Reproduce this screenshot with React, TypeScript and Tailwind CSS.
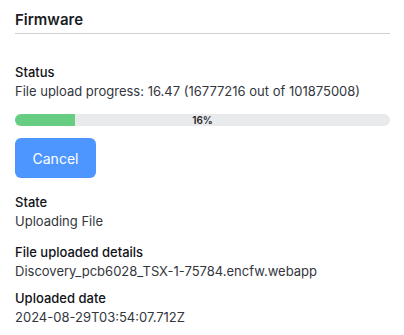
import React from "react";

function Field({ label, value, className = "" }: { label: string; value: string; className?: string }) {
  return (
    <div className={className}>
      <div className="text-[13px] leading-[19px] font-medium text-[#111318]">{label}</div>
      <div className="text-[13px] leading-[19px] text-[#33363d]">{value}</div>
    </div>
  );
}

export default function App() {
  const pct = 16;
  return (
    <div className="w-[404px] h-[335px] bg-white px-[15px] pt-[10px] overflow-hidden" style={{ fontFamily: "Inter, 'Noto Sans', sans-serif" }}>
      <div className="text-[15px] leading-[20px] font-semibold text-[#1a1d24] pb-[3px] border-b border-[#cfd1d4] mr-[-1px]">Firmware</div>
      <Field className="mt-[29px]" label="Status" value="File upload progress: 16.47 (16777216 out of 101875008)" />
      <div className="relative mt-[13px] h-[12px] w-[375px] rounded-full bg-[#e9eaec] overflow-hidden">
        <div className="h-full bg-[#66cd82]" style={{ width: `${pct}%` }} />
        <div className="absolute inset-0 flex items-center justify-center text-[10px] font-semibold text-[#1f2328] leading-none">{pct}%</div>
      </div>
      <button className="mt-[12px] w-[81px] h-[40px] rounded-[6px] bg-[#4d96ff] text-white text-[14px] flex items-center justify-center">Cancel</button>
      <Field className="mt-[15px]" label="State" value="Uploading File" />
      <Field className="mt-[12px]" label="File uploaded details" value="Discovery_pcb6028_TSX-1-75784.encfw.webapp" />
      <Field className="mt-[8px]" label="Uploaded date" value="2024-08-29T03:54:07.712Z" />
    </div>
  );
}
